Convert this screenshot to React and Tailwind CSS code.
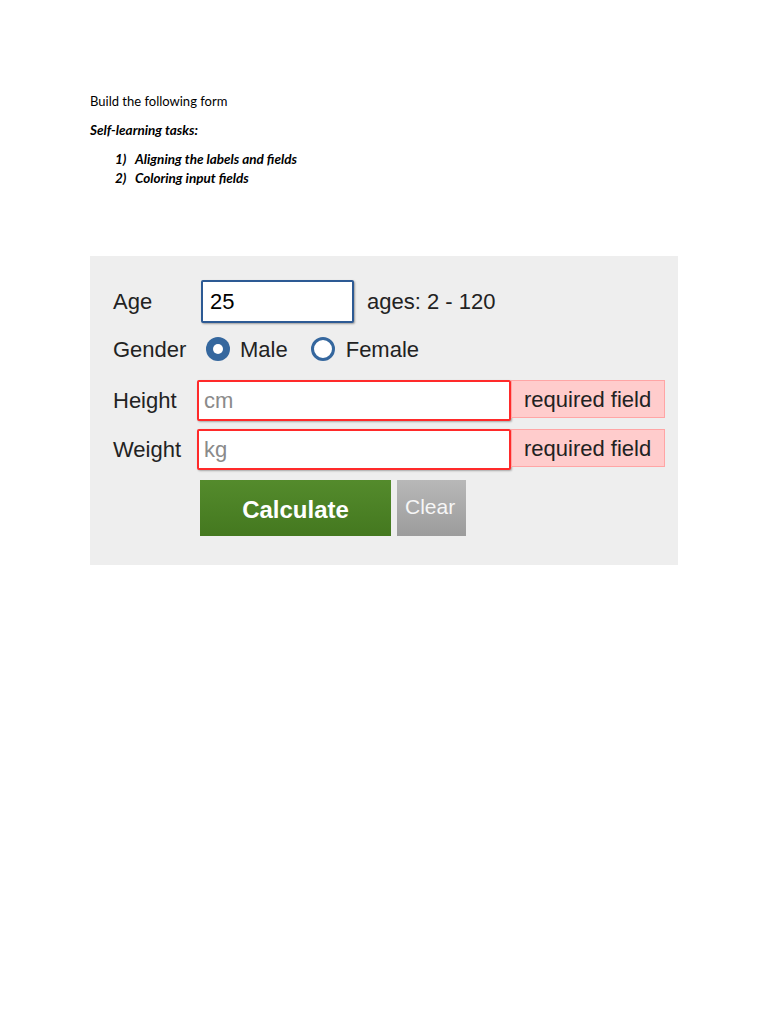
import React from "react";

function Radio({ checked }) {
  return checked ? (
    <span className="flex h-[24px] w-[24px] items-center justify-center rounded-full bg-[#35679e]">
      <span className="h-[10px] w-[10px] rounded-full bg-white" />
    </span>
  ) : (
    <span className="block h-[24px] w-[24px] rounded-full border-[3px] border-[#35679e] bg-white" />
  );
}

export default function App() {
  const arial = { fontFamily: '"Liberation Sans", Arial, sans-serif' };
  return (
    <div className="min-h-[1024px] w-[768px] bg-white">
      <div className="pl-[90px] pt-[93px] text-[13px] leading-[16px] text-black" style={{ fontFamily: 'Lato, "Open Sans", sans-serif' }}>
        <div>Build the following form</div>
        <div className="mt-[13px] text-[13.5px] font-bold italic">Self-learning tasks:</div>
        <div className="mt-[13px] flex flex-col gap-[3px] text-[13.5px] font-bold italic">
          <div className="flex"><span className="ml-[25px] w-[20px]">1)</span><span>Aligning the labels and fields</span></div>
          <div className="flex"><span className="ml-[25px] w-[20px]">2)</span><span>Coloring input fields</span></div>
        </div>
      </div>

      <div className="ml-[90px] mt-[70px] w-[588px] bg-[#eeeeee] pb-[29px] pl-[23px] pt-[24px] text-[22px] text-[#222]" style={arial}>
        {/* Age */}
        <div className="flex h-[43px] items-center">
          <span className="w-[88px]">Age</span>
          <div className="flex h-[43px] w-[153px] items-center rounded-[2px] border-2 border-[#2d5a94] bg-white pl-[7px] text-black shadow-[1px_1px_2px_rgba(0,0,0,0.35)]">25</div>
          <span className="ml-[13px]">ages: 2 - 120</span>
        </div>
        {/* Gender */}
        <div className="mt-[3px] flex h-[46px] items-center">
          <span className="w-[93px]">Gender</span>
          <Radio checked />
          <span className="ml-[10px]">Male</span>
          <span className="ml-[23px]"><Radio /></span>
          <span className="ml-[11px]">Female</span>
        </div>
        {/* Height */}
        <div className="mt-[8px] flex h-[41px] items-center">
          <span className="w-[84px]">Height</span>
          <div className="flex h-[41px] w-[314px] items-center rounded-[2px] border-2 border-[#ff2a2a] bg-white pl-[5px] text-[#8a8a8a] shadow-[1px_1px_2px_rgba(0,0,0,0.3)]">cm</div>
          <div className="flex h-[38px] w-[154px] items-center self-start border border-[#ffa5a5] bg-[#ffcccc] pl-[12px] text-[#222]">required field</div>
        </div>
        {/* Weight */}
        <div className="mt-[8px] flex h-[41px] items-center">
          <span className="w-[84px]">Weight</span>
          <div className="flex h-[41px] w-[314px] items-center rounded-[2px] border-2 border-[#ff2a2a] bg-white pl-[5px] text-[#8a8a8a] shadow-[1px_1px_2px_rgba(0,0,0,0.3)]">kg</div>
          <div className="flex h-[38px] w-[154px] items-center self-start border border-[#ffa5a5] bg-[#ffcccc] pl-[12px] text-[#222]">required field</div>
        </div>
        {/* Buttons */}
        <div className="mt-[10px] flex h-[56px] pl-[87px]">
          <div className="flex h-[56px] w-[191px] items-center justify-center bg-gradient-to-b from-[#548b2c] to-[#44781f] pt-[4px] text-[24px] font-bold text-white">Calculate</div>
          <div className="ml-[6px] flex h-[56px] w-[69px] items-center bg-gradient-to-b from-[#b8b8b8] to-[#9c9c9c] pb-[2px] pl-[8px] text-[21px] text-[#f6f6f6]">Clear</div>
        </div>
      </div>
    </div>
  );
}
